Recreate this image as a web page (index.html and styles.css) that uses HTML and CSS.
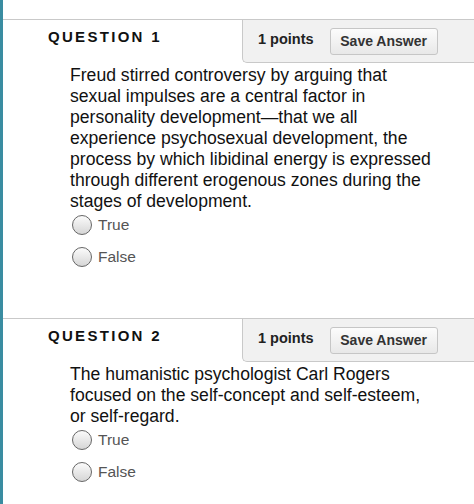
FILE: index.html
```html
<!DOCTYPE html>
<html>
<head>
<meta charset="utf-8">
<link rel="stylesheet" href="styles.css">
</head>
<body>
<div class="page">
  <section class="question">
    <div class="q-head">
      <h2 class="q-title">QUESTION 1</h2>
      <div class="q-points">
        <span class="points">1 points</span>
        <button class="save-btn" type="button">Save Answer</button>
      </div>
    </div>
    <p class="q-text">Freud stirred controversy by arguing that sexual impulses are a central factor in personality development—that we all experience psychosexual development, the process by which libidinal energy is expressed through different erogenous zones during the stages of development.</p>
    <ul class="options">
      <li class="option"><span class="radio"></span><span class="label">True</span></li>
      <li class="option"><span class="radio"></span><span class="label">False</span></li>
    </ul>
  </section>
  <section class="question">
    <div class="q-head">
      <h2 class="q-title">QUESTION 2</h2>
      <div class="q-points">
        <span class="points">1 points</span>
        <button class="save-btn" type="button">Save Answer</button>
      </div>
    </div>
    <p class="q-text">The humanistic psychologist Carl Rogers focused on the self-concept and self-esteem, or self-regard.</p>
    <ul class="options">
      <li class="option"><span class="radio"></span><span class="label">True</span></li>
      <li class="option"><span class="radio"></span><span class="label">False</span></li>
    </ul>
  </section>
</div>
</body>
</html>
```
FILE: styles.css
```css
html, body {
  margin: 0;
  padding: 0;
  background: #ffffff;
  overflow: hidden;
}
body {
  font-family: "Liberation Sans", Arial, Helvetica, sans-serif;
  color: #111;
}
.page {
  border-left: 3px solid #3a8ca1;
  height: 504px;
  box-sizing: border-box;
  padding-top: 19px;
}
.question {
  border-top: 1px solid #c9c9c9;
  padding-bottom: 49px;
}
.question:last-child {
  padding-bottom: 0;
}
.q-head {
  display: flex;
  align-items: flex-start;
}
.q-title {
  flex: 1;
  margin: 0;
  padding: 8px 0 0 45px;
  font-size: 15px;
  line-height: 18px;
  font-weight: bold;
  letter-spacing: 2.3px;
  color: #111;
}
.q-points {
  width: 232px;
  height: 43px;
  box-sizing: border-box;
  display: flex;
  align-items: center;
  gap: 16px;
  padding-left: 15px;
  background: #f1f1f1;
  border-left: 1px solid #c9c9c9;
  border-bottom: 1px solid #c9c9c9;
  border-bottom-left-radius: 5px;
}
.points {
  font-size: 14.5px;
  font-weight: bold;
  color: #222;
  padding-bottom: 4px;
}
.save-btn {
  width: 108px;
  height: 27px;
  padding: 0;
  font-family: "Liberation Sans", Arial, sans-serif;
  font-size: 14px;
  font-weight: bold;
  color: #333;
  background: linear-gradient(#fcfcfc, #e8e8e8);
  border: 1px solid #c6c6c6;
  border-radius: 3px;
}
.q-text {
  margin: 2px 0 0 67px;
  width: 365px;
  font-size: 17.6px;
  line-height: 21px;
  color: #111;
}
.options {
  list-style: none;
  margin: 1px 0 0 69px;
  padding: 0;
  display: flex;
  flex-direction: column;
  gap: 8px;
}
.option {
  display: flex;
  align-items: center;
  height: 24px;
  gap: 6px;
}
.radio {
  width: 20px;
  height: 20px;
  box-sizing: border-box;
  border-radius: 50%;
  border: 1.5px solid #666;
  background: linear-gradient(#fbfbfb, #d6d6d6);
}
.label {
  font-size: 15.5px;
  color: #555;
}
```
